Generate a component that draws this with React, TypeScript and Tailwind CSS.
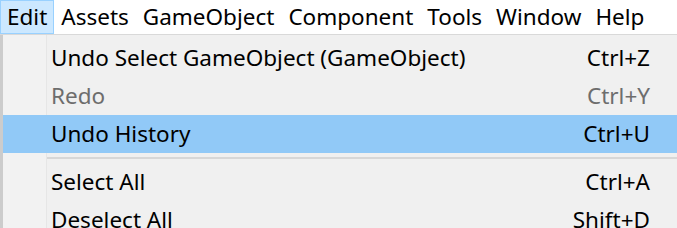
export default function App() {
  const menus = ["Edit", "Assets", "GameObject", "Component", "Tools", "Window", "Help"];

  const items = [
    { label: "Undo Select GameObject (GameObject)", shortcut: "Ctrl+Z" },
    { label: "Redo", shortcut: "Ctrl+Y", disabled: true },
    { label: "Undo History", shortcut: "Ctrl+U", active: true },
    { sep: true },
    { label: "Select All", shortcut: "Ctrl+A" },
    { label: "Deselect All", shortcut: "Shift+D" },
  ];

  return (
    <div
      className="w-[677px] h-[228px] overflow-hidden bg-white text-[22.5px] text-black"
      style={{ fontFamily: '"Noto Sans", "Open Sans", sans-serif' }}
    >
      {/* Menu bar */}
      <div className="flex h-[35px] items-stretch border-b border-[#d9d9d9] bg-white">
        {menus.map((m, i) => (
          <div
            key={m}
            className={
              i === 0
                ? "flex items-center px-[6px] bg-[#cce8ff] border border-[#99d1ff] leading-none"
                : "flex items-center px-[6px] border border-transparent leading-none"
            }
          >
            {m}
          </div>
        ))}
      </div>

      {/* Dropdown */}
      <div className="relative border-l-[3px] border-[#cccccc] bg-[#f0f0f0] pt-[4px] h-[193px]">
        <div className="absolute left-0 top-0 bottom-0 w-[44px] bg-[#f2f2f2] border-r border-[#e6e6e6]" />
        {items.map((it, i) =>
          it.sep ? (
            <div key={i} className="relative flex h-[10px] items-center pl-[44px]">
              <div className="h-[2px] w-full bg-[#d7d7d7]" />
            </div>
          ) : (
            <div
              key={i}
              className={
                it.active
                  ? "relative flex h-[38px] items-center justify-between bg-[#91c9f7] pl-[48px] pr-[27px] leading-none"
                  : "relative flex h-[38px] items-center justify-between pl-[48px] pr-[27px] leading-none"
              }
            >
              <span className={it.disabled ? "text-[#6d6d6d]" : ""}>{it.label}</span>
              <span className={it.disabled ? "text-[#6d6d6d]" : ""}>{it.shortcut}</span>
            </div>
          )
        )}
      </div>
    </div>
  );
}
